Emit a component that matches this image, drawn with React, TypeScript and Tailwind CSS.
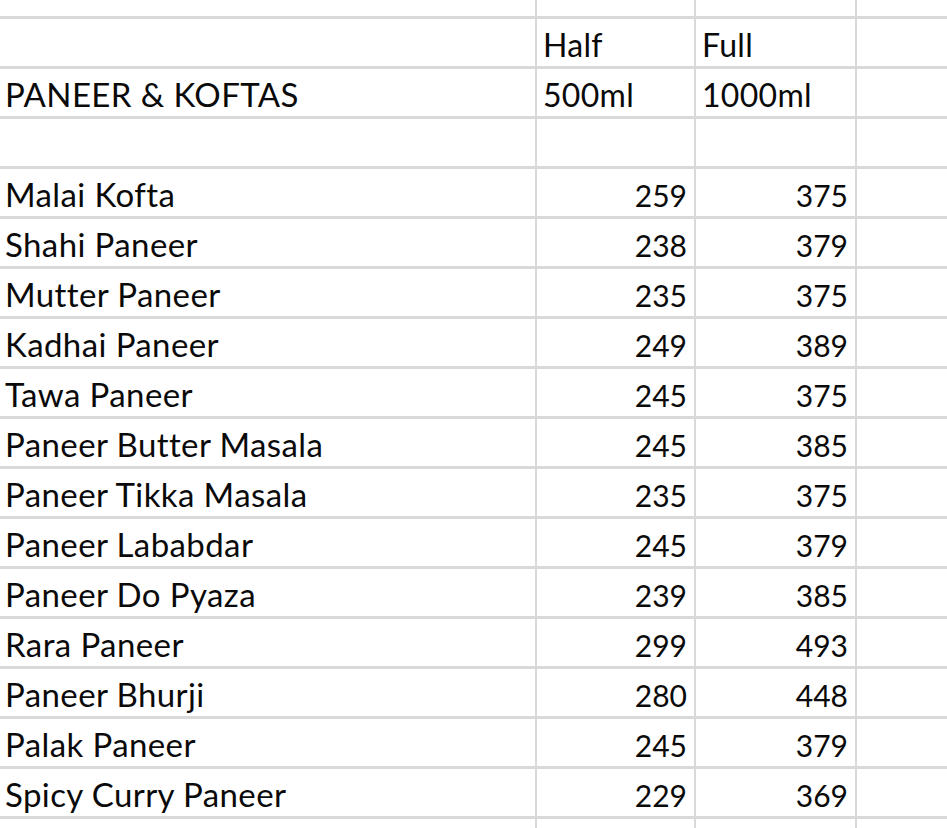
const ITEMS: [string, number, number][] = [
  ['Malai Kofta', 259, 375],
  ['Shahi Paneer', 238, 379],
  ['Mutter Paneer', 235, 375],
  ['Kadhai Paneer', 249, 389],
  ['Tawa Paneer', 245, 375],
  ['Paneer Butter Masala', 245, 385],
  ['Paneer Tikka Masala', 235, 375],
  ['Paneer Lababdar', 245, 379],
  ['Paneer Do Pyaza', 239, 385],
  ['Rara Paneer', 299, 493],
  ['Paneer Bhurji', 280, 448],
  ['Palak Paneer', 245, 379],
  ['Spicy Curry Paneer', 229, 369],
]

type Cells = { a?: string; b?: string | number; c?: string | number; numeric?: boolean }

// spreadsheet row: 47px cell + 3px grid line
function Row({ a, b, c, numeric, h = 'h-[50px]' }: Cells & { h?: string }) {
  const num = numeric
    ? 'justify-end pr-[7px] pb-[6px] text-[30px]'
    : 'pl-[6px] pb-[5px] text-[32px] tracking-[0.3px]'
  return (
    <div className={`flex ${h} shrink-0 border-b-[3px] border-[#d9d9d9]`}>
      <div className="flex w-[537px] shrink-0 items-end border-r-2 border-[#d9d9d9] pb-[5px] pl-[5px] text-[33px] tracking-[0.4px]">
        {a}
      </div>
      <div className={`flex w-[159px] shrink-0 items-end border-r-2 border-[#d9d9d9] ${num}`}>{b}</div>
      <div className={`flex w-[161px] shrink-0 items-end border-r-2 border-[#d9d9d9] ${num}`}>{c}</div>
      <div className="flex-1" />
    </div>
  )
}

export default function App() {
  return (
    <div
      className="flex h-[828px] w-[947px] flex-col overflow-hidden bg-white leading-none text-[#0a0a0a]"
      style={{ fontFamily: 'Lato, "Open Sans", sans-serif' }}
    >
      <Row h="h-[19px]" />
      <Row b="Half" c="Full" />
      <Row a="PANEER & KOFTAS" b="500ml" c="1000ml" />
      <Row />
      {ITEMS.map(([name, half, full]) => (
        <Row key={name} a={name} b={half} c={full} numeric />
      ))}
      <Row />
    </div>
  )
}
